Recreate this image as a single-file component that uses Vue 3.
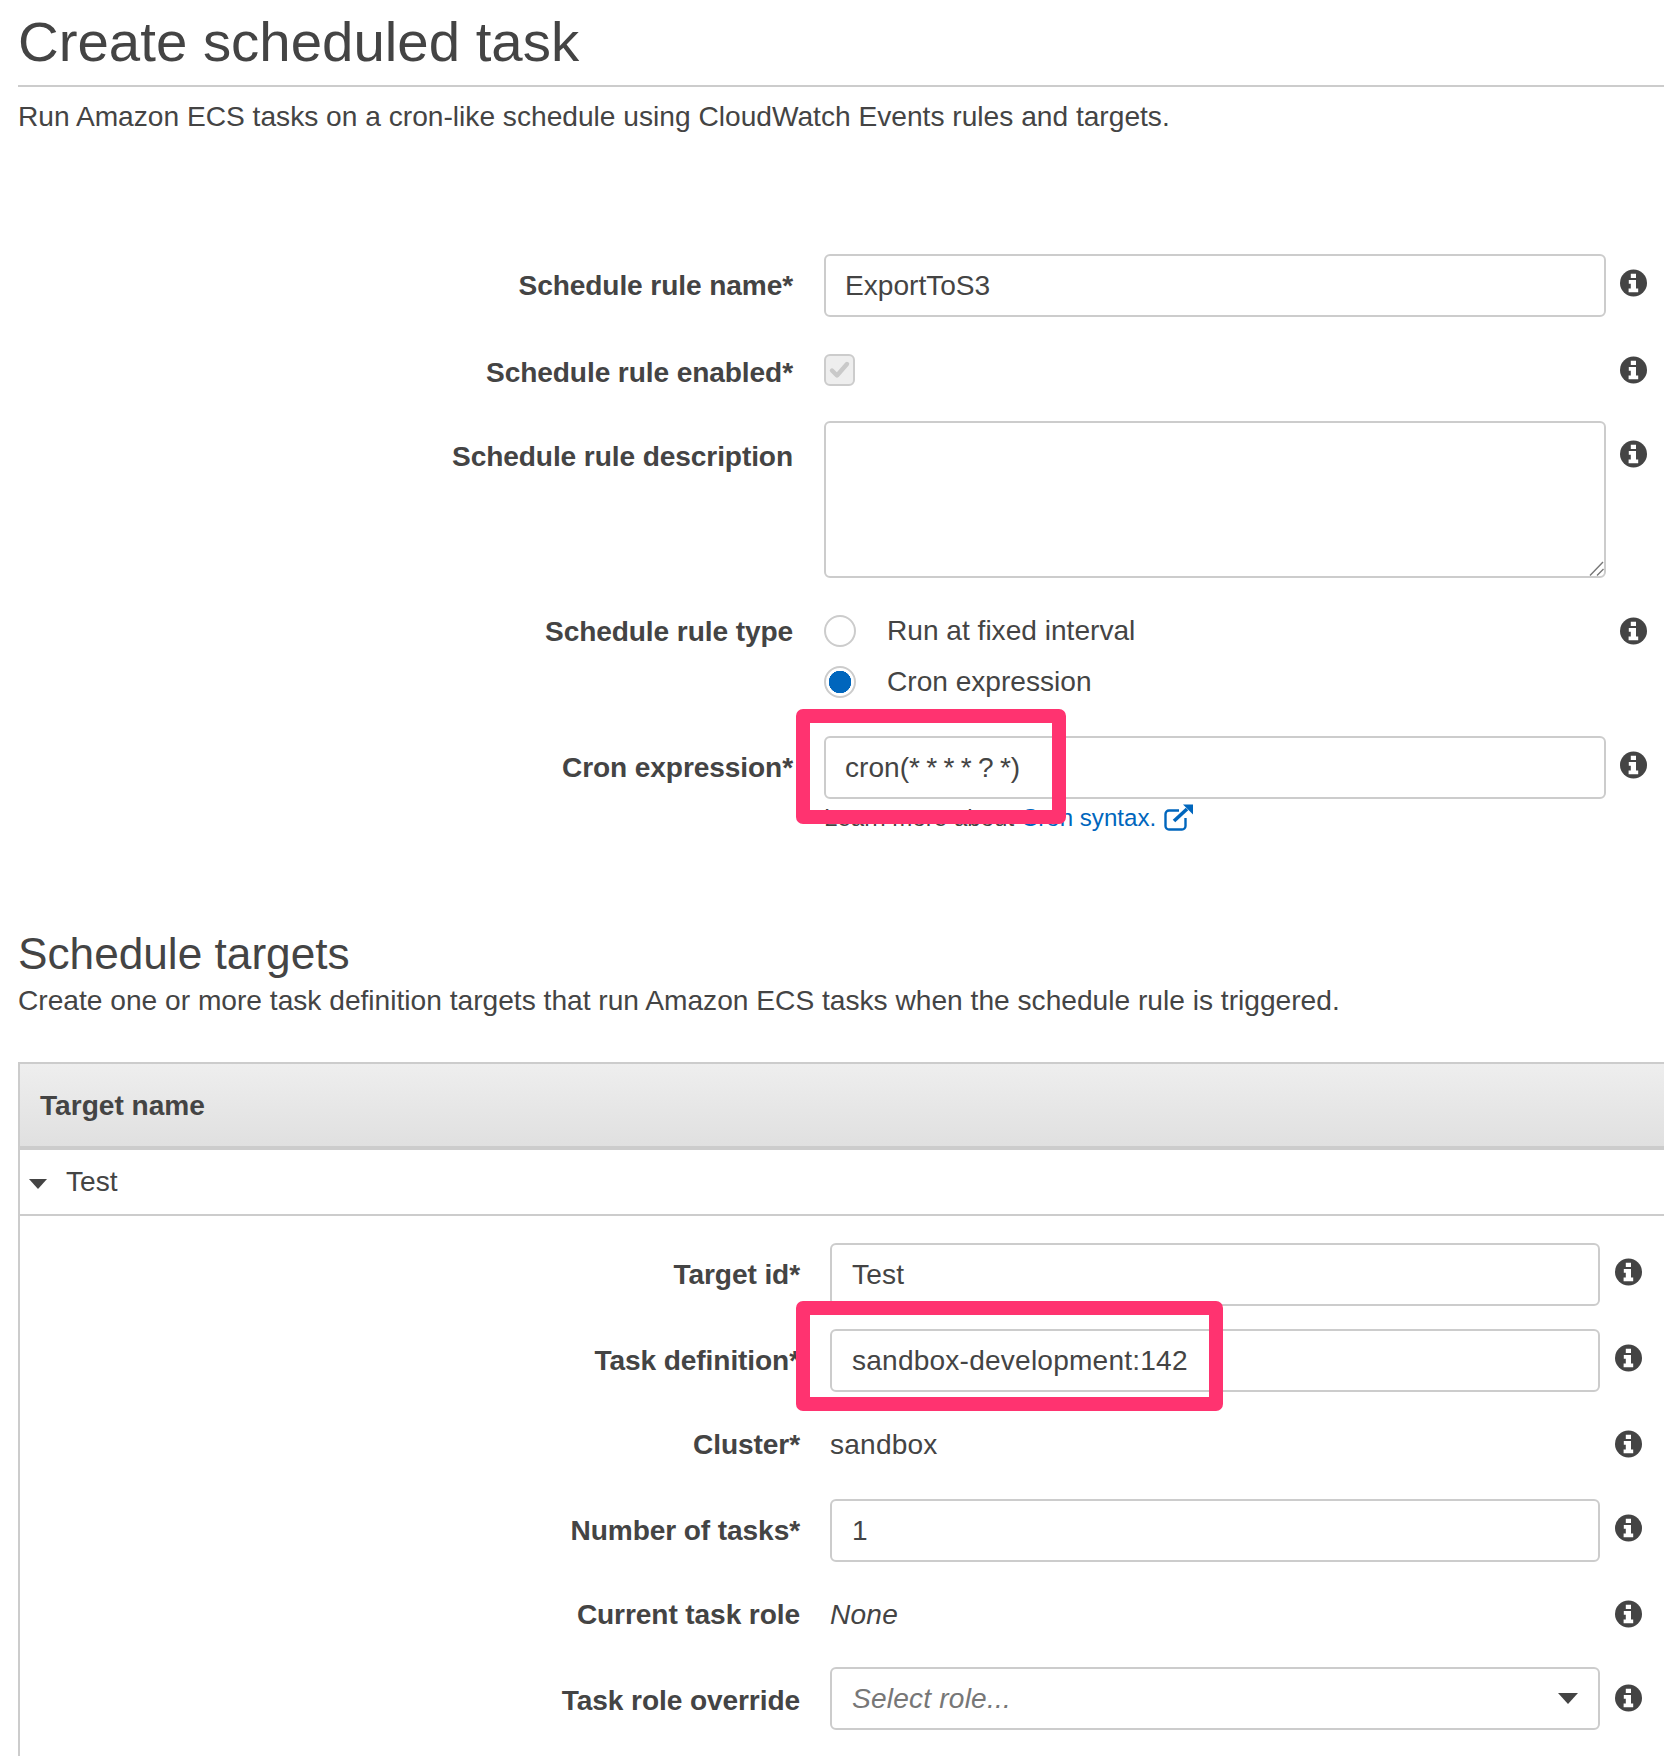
<template>
  <div class="page">
    <svg class="defs" width="0" height="0">
      <symbol id="i-info" viewBox="0 0 27 27">
        <circle cx="13.5" cy="13.5" r="13.5" fill="#444" />
        <path fill="#fff" d="M10.8 4.2H16V8.6H10.8ZM8.8 10.4H16V19H18.2V22.8H8.6V19H10.8V14.2H8.8Z" />
      </symbol>
    </svg>

    <h1 class="title">Create scheduled task</h1>
    <p class="lead">Run Amazon ECS tasks on a cron-like schedule using CloudWatch Events rules and targets.</p>

    <div class="form">
      <div class="row row-name">
        <label class="label mid">Schedule rule name*</label>
        <input class="input" type="text" value="ExportToS3" readonly />
        <svg class="info mid-icon"><use href="#i-info" /></svg>
      </div>
      <div class="row row-enabled">
        <label class="label check-label">Schedule rule enabled*</label>
        <span class="checkbox">
          <svg width="23" height="20" viewBox="0 0 23 20">
            <path d="M4 10.5l5 5L19 4" fill="none" stroke="#c9c9c9" stroke-width="4.4" stroke-linecap="round" stroke-linejoin="round" />
          </svg>
        </span>
        <svg class="info check-icon"><use href="#i-info" /></svg>
      </div>
      <div class="row row-desc">
        <label class="label desc-label">Schedule rule description</label>
        <div class="control">
          <textarea class="textarea"></textarea>
          <svg class="grip" width="15" height="15" viewBox="0 0 15 15">
            <path d="M1 14.500L14 1M8 14.500L14.500 8" fill="none" stroke="#777" stroke-width="1.400" />
          </svg>
        </div>
        <svg class="info desc-icon"><use href="#i-info" /></svg>
      </div>
      <div class="row row-type">
        <label class="label type-label">Schedule rule type</label>
        <div class="radios">
          <div class="radio-row"><span class="radio"></span><span>Run at fixed interval</span></div>
          <div class="radio-row"><span class="radio on"></span><span>Cron expression</span></div>
        </div>
        <svg class="info type-icon"><use href="#i-info" /></svg>
      </div>
      <div class="row last">
        <label class="label mid">Cron expression*</label>
        <div class="control">
          <input class="input cron-input" type="text" value="cron(* * * * ? *)" readonly />
          <p class="help">Learn more about <a class="link">Cron syntax.</a>
            <svg class="ext" width="30" height="27" viewBox="0 0 30 27">
              <path d="M15 6.500H5A3.500 3.500 0 0 0 1.500 10V22A3.500 3.500 0 0 0 5 25.500H18A3.500 3.500 0 0 0 21.500 22V14" fill="none" stroke="#0066bd" stroke-width="2.400" />
              <path d="M10 17L23 5" fill="none" stroke="#0066bd" stroke-width="3.600" />
              <path d="M19 0.500H29V10.500Z" fill="#0066bd" />
            </svg>
          </p>
          <div class="mark mark-cron"></div>
        </div>
        <svg class="info mid-icon"><use href="#i-info" /></svg>
      </div>
    </div>

    <h2 class="subtitle">Schedule targets</h2>
    <p class="lead sub-lead">Create one or more task definition targets that run Amazon ECS tasks when the schedule rule is triggered.</p>

    <div class="table">
      <div class="thead">Target name</div>
      <div class="tr"><span class="caret"></span>Test</div>
      <div class="form inner">
        <div class="row">
          <label class="label mid">Target id*</label>
          <input class="input" type="text" value="Test" readonly />
          <svg class="info mid-icon"><use href="#i-info" /></svg>
        </div>
        <div class="row">
          <label class="label mid">Task definition*</label>
          <div class="control">
            <input class="input" type="text" value="sandbox-development:142" readonly />
            <div class="mark mark-task"></div>
          </div>
          <svg class="info mid-icon"><use href="#i-info" /></svg>
        </div>
        <div class="row plain">
          <label class="label">Cluster*</label>
          <span class="value">sandbox</span>
          <svg class="info"><use href="#i-info" /></svg>
        </div>
        <div class="row">
          <label class="label mid">Number of tasks*</label>
          <input class="input" type="text" value="1" readonly />
          <svg class="info mid-icon"><use href="#i-info" /></svg>
        </div>
        <div class="row plain row-role">
          <label class="label">Current task role</label>
          <span class="value none">None</span>
          <svg class="info"><use href="#i-info" /></svg>
        </div>
        <div class="row row-override">
          <label class="label mid">Task role override</label>
          <div class="select"><span>Select role...</span><span class="caret big"></span></div>
          <svg class="info mid-icon"><use href="#i-info" /></svg>
        </div>
      </div>
    </div>
  </div>
</template>

<script setup>
</script>

<style>
html, body {
  margin: 0;
  background: #fff;
}
</style>

<style scoped>
.page {
  height: 1756px;
  overflow: hidden;
  padding-left: 18px;
  box-sizing: border-box;
  display: flex;
  flex-direction: column;
  font-family: "Liberation Sans", Arial, sans-serif;
  font-size: 28.1px;
  color: #444;
}
.defs {
  position: absolute;
}
.title {
  margin: 0;
  padding-top: 10px;
  height: 75px;
  line-height: 64px;
  font-size: 56.4px;
  font-weight: 400;
  border-bottom: 2px solid #ccc;
  box-sizing: content-box;
}
.lead {
  margin: 13px 0 0;
  line-height: 34px;
  font-size: 28.15px;
}
.form {
  margin-top: 120px;
}
.row {
  display: grid;
  grid-template-columns: 775px 782px 1fr;
  column-gap: 31px;
  margin-bottom: 36px;
  align-items: start;
}
.row-name {
  margin-bottom: 37px;
}
.row-enabled {
  margin-bottom: 31px;
}
.row-desc {
  margin-bottom: 37px;
}
.row-type {
  margin-bottom: 38px;
}
.row.last {
  margin-bottom: 0;
}
.label {
  font-weight: 700;
  text-align: right;
  line-height: 34px;
  white-space: nowrap;
  letter-spacing: -0.1px;
}
.label.mid {
  padding-top: 15px;
}
.check-label {
  padding-top: 2px;
}
.desc-label {
  padding-top: 19px;
}
.type-label {
  padding-top: 0;
}
.input,
.textarea,
.select {
  display: block;
  box-sizing: border-box;
  width: 100%;
  height: 63px;
  margin: 0;
  padding: 0 19px;
  border: 2px solid #ccc;
  border-radius: 6px;
  background: #fff;
  font: inherit;
  color: #444;
  outline: none;
}
.textarea {
  height: 157px;
  resize: none;
}
.cron-input {
  word-spacing: -1.5px;
}
.control {
  position: relative;
}
.grip {
  position: absolute;
  right: 2px;
  bottom: 2px;
}
.checkbox {
  width: 31px;
  height: 32px;
  box-sizing: border-box;
  border: 2px solid #ccc;
  border-radius: 6px;
  background: #eee;
  display: flex;
  align-items: center;
  justify-content: center;
}
.radios {
  display: flex;
  flex-direction: column;
  gap: 19px;
}
.radio-row {
  display: flex;
  align-items: center;
  gap: 31px;
  height: 32px;
  line-height: 32px;
}
.radio {
  width: 32px;
  height: 32px;
  box-sizing: border-box;
  border: 2px solid #ccc;
  border-radius: 50%;
  background: #fff;
}
.radio.on {
  background: radial-gradient(circle, #0066bd 0 11px, #fff 11.5px);
}
.info {
  display: block;
  width: 27px;
  height: 28px;
  margin-left: -17px;
}
.mid-icon {
  margin-top: 15px;
}
.check-icon {
  margin-top: 2px;
}
.desc-icon {
  margin-top: 19px;
}
.type-icon {
  margin-top: 2px;
}
.help {
  margin: 0;
  line-height: 38px;
  font-size: 24.1px;
}
.link {
  color: #0066bd;
}
.ext {
  vertical-align: -5px;
  margin-left: 8px;
}
.mark {
  position: absolute;
  box-sizing: border-box;
  border: 14px solid #ff3370;
  border-radius: 7px;
}
.mark-cron {
  left: -28px;
  top: -27px;
  width: 270px;
  height: 115px;
}
.mark-task {
  left: -34px;
  top: -28px;
  width: 427px;
  height: 110px;
}
.subtitle {
  margin: 91px 0 0;
  font-size: 44.2px;
  font-weight: 400;
  line-height: 52px;
}
.sub-lead {
  margin-top: 4px;
}
.table {
  flex: 1;
  margin-top: 44px;
  border-left: 2px solid #ccc;
  border-top: 2px solid #ccc;
}
.thead {
  height: 82px;
  box-sizing: border-box;
  padding: 0 20px;
  line-height: 84px;
  font-weight: 700;
  background: linear-gradient(#eeeeee, #e0e0e0);
}
.tr {
  border-top: 4px solid #ccc;
  border-bottom: 2px solid #ccc;
  height: 64px;
  display: flex;
  align-items: center;
  line-height: 66px;
  padding-left: 9px;
}
.tr .caret {
  margin: 3px 19px 0 0;
}
.caret {
  display: inline-block;
  width: 0;
  height: 0;
  border-left: 9.5px solid transparent;
  border-right: 9.5px solid transparent;
  border-top: 10px solid #444;
}
.caret.big {
  border-left-width: 10.5px;
  border-right-width: 10.5px;
  border-top-width: 11px;
}
.inner {
  margin-top: 27px;
}
.inner .row {
  grid-template-columns: 780px 770px 1fr;
  column-gap: 30px;
  margin-bottom: 23px;
}
.inner .row.plain {
  margin-top: 36px;
  margin-bottom: 37px;
}
.inner .row.row-role {
  margin-bottom: 35px;
}
.row-override .label.mid {
  padding-top: 17px;
}
.row-override .info.mid-icon {
  margin-top: 17px;
}
.inner .input,
.inner .select,
.inner .value {
  letter-spacing: 0.2px;
}
.inner .input,
.inner .select {
  padding: 0 20px;
}
.inner .info {
  margin-left: -15px;
}
.inner .plain .info {
  margin-top: 2px;
}
.value {
  line-height: 34px;
}
.none {
  font-style: italic;
}
.select {
  display: flex;
  align-items: center;
  justify-content: space-between;
  font-style: italic;
  color: #777;
}
</style>
